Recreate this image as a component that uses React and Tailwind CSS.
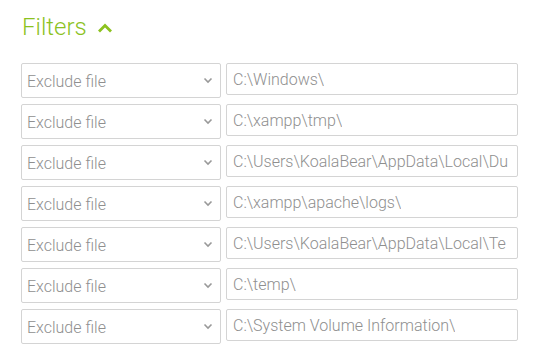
import React from "react";

const paths = [
  "C:\\Windows\\",
  "C:\\xampp\\tmp\\",
  "C:\\Users\\KoalaBear\\AppData\\Local\\Du",
  "C:\\xampp\\apache\\logs\\",
  "C:\\Users\\KoalaBear\\AppData\\Local\\Te",
  "C:\\temp\\",
  "C:\\System Volume Information\\",
];

export default function App() {
  return (
    <div className="w-[541px] h-[361px] bg-white pl-[21px] pt-[12px]" style={{ fontFamily: "Roboto, 'Noto Sans', sans-serif" }}>
      <div className="flex items-center gap-[10px] h-[30px]">
        <span className="text-[24px] font-light leading-[30px] text-[#8cc21f] ml-[1px]">Filters</span>
        <svg width="16" height="10" viewBox="0 0 16 10" className="mt-[1px]">
          <path d="M2 8.5 L8 2.5 L14 8.5" fill="none" stroke="#8cc21f" strokeWidth="2.8" />
        </svg>
      </div>
      <div className="flex flex-col gap-[6px] mt-[21px]">
        {paths.map((p, i) => (
          <div key={i} className="flex items-start gap-[5px]">
            <div className="w-[200px] h-[35px] border border-[#d4d4d4] rounded-[2px] flex items-center justify-between pl-[5px] pr-[7px]">
              <span className="text-[16px] font-light text-[#8f8f8f] pt-[2px]">Exclude file</span>
              <svg width="10" height="7" viewBox="0 0 10 7">
                <path d="M1.5 1.5 L5 5 L8.5 1.5" fill="none" stroke="#999999" strokeWidth="1.6" />
              </svg>
            </div>
            <div className="w-[292px] h-[32px] border border-[#d4d4d4] rounded-[2px] flex items-center pl-[6px] pr-[4px] overflow-hidden">
              <span className="text-[16px] font-light text-[#8f8f8f] whitespace-nowrap overflow-hidden pt-[1px]">{p}</span>
            </div>
          </div>
        ))}
      </div>
    </div>
  );
}
